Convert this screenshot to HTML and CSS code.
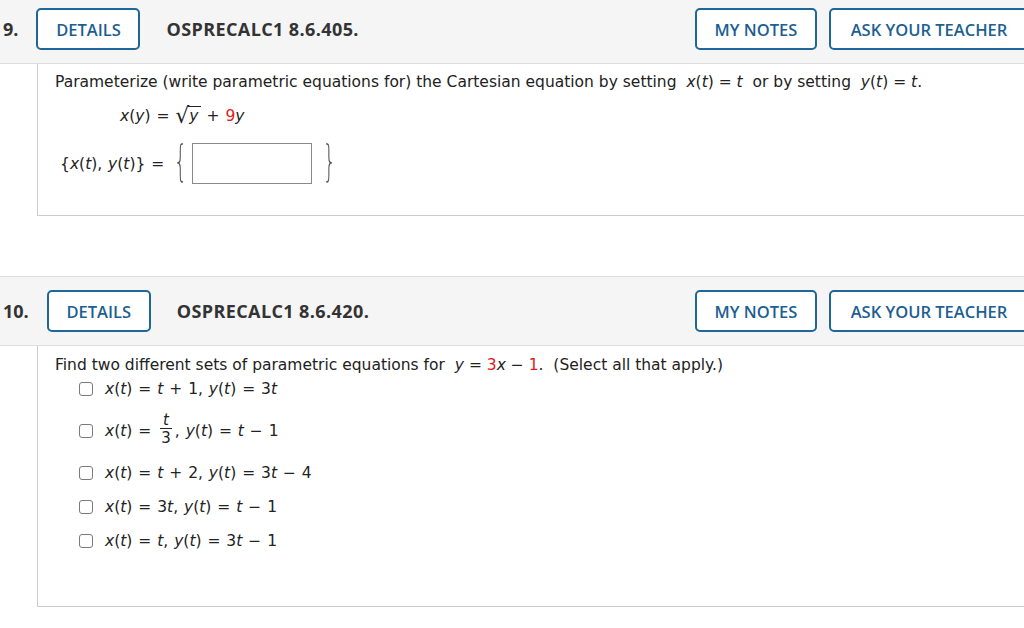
FILE: index.html
```html
<!DOCTYPE html>
<html lang="en">
<head>
<meta charset="utf-8">
<title>Questions</title>
<link rel="stylesheet" href="styles.css">
</head>
<body>
<div class="page">
  <section class="question">
    <header class="q-head">
      <span class="q-num">9.</span>
      <button class="btn btn-details">DETAILS</button>
      <span class="q-title">OSPRECALC1 8.6.405.</span>
      <div class="q-actions">
        <button class="btn btn-notes">MY NOTES</button>
        <button class="btn btn-ask">ASK YOUR TEACHER</button>
      </div>
    </header>
    <div class="q-body body-1">
      <p class="prompt">Parameterize (write parametric equations for) the Cartesian equation by setting&nbsp; <i>x</i>(<i>t</i>) = <i>t</i> &nbsp;or by setting&nbsp; <i>y</i>(<i>t</i>) = <i>t</i>.</p>
      <div class="eq eq-given"><i>x</i>(<i>y</i>) = <span class="sqrt"><span class="radic">√</span><span class="radicand"><i>y</i></span></span> + <span class="red">9</span><i>y</i></div>
      <div class="eq eq-set">
        <span class="set-label">{<i>x</i>(<i>t</i>), <i>y</i>(<i>t</i>)} =</span>
        <span class="brace">{</span>
        <input class="answer" type="text" aria-label="answer">
        <span class="brace brace-r">}</span>
      </div>
    </div>
  </section>

  <section class="question q-second">
    <header class="q-head">
      <span class="q-num">10.</span>
      <button class="btn btn-details">DETAILS</button>
      <span class="q-title">OSPRECALC1 8.6.420.</span>
      <div class="q-actions">
        <button class="btn btn-notes">MY NOTES</button>
        <button class="btn btn-ask">ASK YOUR TEACHER</button>
      </div>
    </header>
    <div class="q-body body-2">
      <p class="prompt">Find two different sets of parametric equations for&nbsp; <i>y</i> = <span class="red">3</span><i>x</i> − <span class="red">1</span>.&nbsp; (Select all that apply.)</p>
      <ul class="options">
        <li class="option"><input type="checkbox" class="cb"><span><i>x</i>(<i>t</i>) = <i>t</i> + 1, <i>y</i>(<i>t</i>) = 3<i>t</i></span></li>
        <li class="option opt-frac"><input type="checkbox" class="cb"><span><i>x</i>(<i>t</i>) = <span class="frac"><span class="num"><i>t</i></span><span class="den">3</span></span>, <i>y</i>(<i>t</i>) = <i>t</i> − 1</span></li>
        <li class="option"><input type="checkbox" class="cb"><span><i>x</i>(<i>t</i>) = <i>t</i> + 2, <i>y</i>(<i>t</i>) = 3<i>t</i> − 4</span></li>
        <li class="option"><input type="checkbox" class="cb"><span><i>x</i>(<i>t</i>) = 3<i>t</i>, <i>y</i>(<i>t</i>) = <i>t</i> − 1</span></li>
        <li class="option"><input type="checkbox" class="cb"><span><i>x</i>(<i>t</i>) = <i>t</i>, <i>y</i>(<i>t</i>) = 3<i>t</i> − 1</span></li>
      </ul>
    </div>
  </section>
</div>
</body>
</html>
```

FILE: styles.css
```css
html, body {
  margin: 0;
  padding: 0;
  background: #ffffff;
  overflow: hidden;
}

.page {
  width: 1030px;
  margin-top: -6px;
  font-family: "DejaVu Sans", Verdana, sans-serif;
  color: #222222;
}

.q-second {
  margin-top: 60px;
}

.q-head {
  display: flex;
  align-items: center;
  padding: 13px 0;
  background: #f5f5f5;
  border-top: 1px solid #dddddd;
  border-bottom: 1px solid #dddddd;
  font-family: "Open Sans", "Noto Sans", sans-serif;
}

.q-num {
  padding-left: 3px;
  margin-right: 18px;
  font-size: 18px;
  font-weight: 700;
  color: #333333;
}

.btn {
  height: 42px;
  box-sizing: border-box;
  border: 2px solid #1f6699;
  border-radius: 5px;
  background: #ffffff;
  color: #1d5f91;
  font-family: "Open Sans", "Noto Sans", sans-serif;
  font-size: 16.5px;
  font-weight: 600;
  padding: 0;
  cursor: pointer;
}

.btn-details { width: 104px; }
.btn-notes { width: 122px; }
.btn-ask { width: 200px; }

.q-title {
  margin-left: 26px;
  font-size: 18px;
  letter-spacing: 0.4px;
  font-weight: 700;
  color: #333333;
}

.q-actions {
  margin-left: auto;
  display: flex;
  gap: 12px;
  padding-right: 1px;
}

.q-body {
  margin-left: 37px;
  border-left: 1px solid #cccccc;
  border-bottom: 1px solid #cccccc;
  padding: 8px 0 0 17px;
  font-size: 15.5px;
  line-height: 20px;
}

.body-1 { padding-bottom: 31px; }
.body-2 { height: 261px; box-sizing: border-box; padding-top: 9px; }

.prompt {
  margin: 0;
}

.q-body i {
  font-style: italic;
}

.red { color: #e31a1a; }

.eq-given {
  margin-top: 13px;
  padding-left: 65px;
  word-spacing: 1px;
}

.sqrt {
  display: inline-flex;
  align-items: flex-end;
  vertical-align: bottom;
}

.radic {
  font-size: 22px;
  line-height: 21px;
  margin-right: -1px;
}

.radicand {
  border-top: 1px solid #222222;
  padding: 0 2px 0 1px;
  line-height: 19px;
}

.eq-set {
  margin-top: 17px;
  padding-left: 5px;
  display: flex;
  align-items: center;
  height: 41px;
}

.set-label {
  margin-right: 6px;
  word-spacing: 1px;
}

.brace {
  font-family: "DejaVu Sans", sans-serif;
  font-weight: 200;
  font-size: 42px;
  line-height: 41px;
  color: #555555;
  transform: scale(0.5, 1) translateZ(0);
  display: inline-block;
  margin: 0 0 4px -3px;
}

.brace-r {
  margin-left: 4px;
}

.answer {
  width: 120px;
  height: 41px;
  box-sizing: border-box;
  border: 1px solid #8a8a8a;
  margin: 0 0 0 -2px;
  padding: 0 4px;
  font-size: 15px;
}

.options {
  list-style: none;
  margin: 4px 0 0 0;
  padding: 0 0 0 24px;
  display: flex;
  flex-direction: column;
  gap: 14px;
  word-spacing: 1px;
}

.option {
  display: flex;
  align-items: center;
  min-height: 20px;
}

.opt-frac {
  min-height: 36px;
}

.cb {
  appearance: none;
  -webkit-appearance: none;
  width: 14px;
  height: 14px;
  box-sizing: border-box;
  border: 1.5px solid #7a7a7a;
  border-radius: 3px;
  background: #ffffff;
  margin: 0 12px 0 0;
  flex: none;
}

.frac {
  display: inline-flex;
  flex-direction: column;
  align-items: center;
  vertical-align: middle;
  font-size: 15px;
  line-height: 16px;
  margin: -4px 1px 0;
}

.frac .num {
  border-bottom: 1px solid #222222;
  padding: 0 3px;
}

.frac .den {
  padding: 1px 3px 0;
}
```
